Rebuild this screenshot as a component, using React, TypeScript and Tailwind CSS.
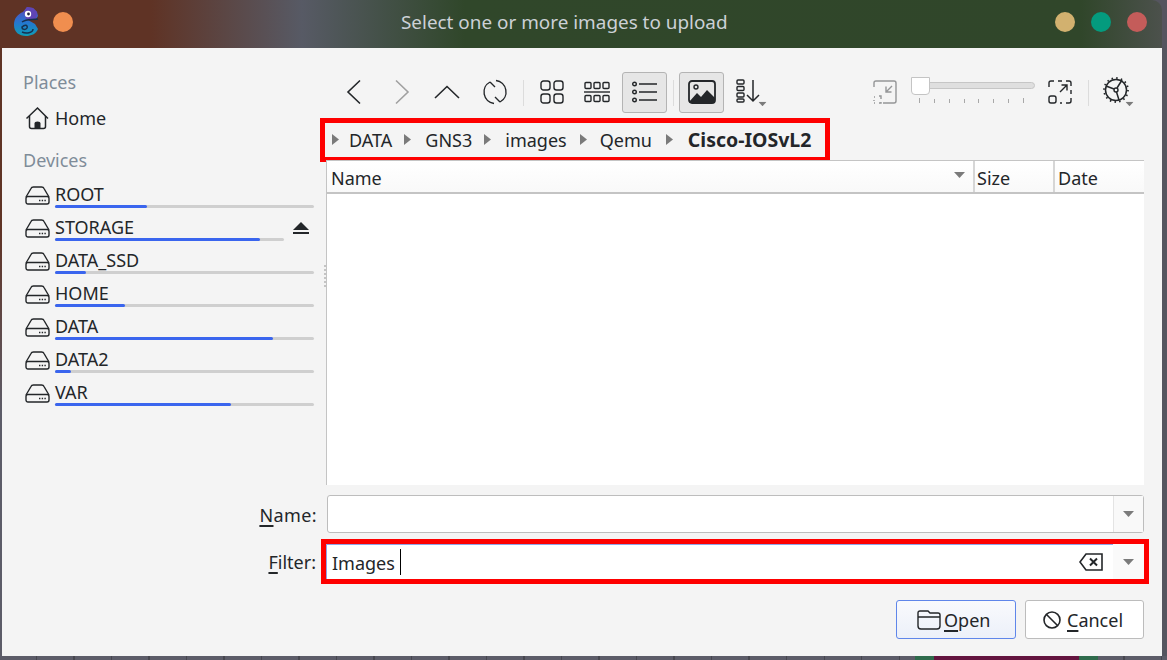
import { ReactNode } from "react";

const DEVICES = [
  { name: "ROOT", used: 92 },
  { name: "STORAGE", used: 205, track: 229, eject: true },
  { name: "DATA_SSD", used: 31 },
  { name: "HOME", used: 70 },
  { name: "DATA", used: 218 },
  { name: "DATA2", used: 16 },
  { name: "VAR", used: 176 },
];

function Svg({ w, h, children, className }: { w: number; h: number; children: ReactNode; className?: string }) {
  return (
    <svg
      width={w}
      height={h}
      viewBox={`0 0 ${w} ${h}`}
      fill="none"
      stroke="#232629"
      strokeWidth="1.4"
      className={className}
    >
      {children}
    </svg>
  );
}

function Logo() {
  return (
    <svg width="26" height="30" viewBox="0 0 26 30" className="shrink-0">
      <defs>
        <linearGradient id="logoBody" x1="0" y1="0" x2="0" y2="1">
          <stop offset="0" stopColor="#5b49bd" />
          <stop offset="0.55" stopColor="#2478d0" />
          <stop offset="1" stopColor="#0f9db5" />
        </linearGradient>
      </defs>
      <path d="M1 18C1 11 5 7 10 5L14 0L20 1L24 5L25 9L23 12L15 13L22 17L25 22C23 27 18 29 13 29C6 29 1 25 1 18Z" fill="url(#logoBody)" />
      <path d="M11 5L14 0L20 1L24 5L23 12L13 12Z" fill="#5f45b5" />
      <circle cx="15" cy="7" r="3.2" fill="#fff" />
      <circle cx="15.5" cy="7" r="1.4" fill="#26243f" />
      <path d="M9 15C13 12 19 13 25 12M9 20C12 17 15 18 14 21C13 23 9 23 9 20ZM9 25C13 27 20 26 20 22" stroke="#16304f" strokeWidth="1.5" fill="none" />
    </svg>
  );
}

function HomeIcon() {
  return (
    <Svg w={24} h={24}>
      <path d="M1.5 12.5L12.5 2L23 12.5" strokeWidth="1.5" />
      <path d="M4.5 10V20.5Q4.5 22.5 6.5 22.5H18.5Q20.5 22.5 20.5 20.5V10" strokeWidth="1.5" />
      <path d="M9.5 22.5V17.5Q9.5 15.5 12.5 15.5Q15.5 15.5 15.5 17.5V22.5Z" fill="#232629" stroke="none" />
    </Svg>
  );
}

function DriveIcon() {
  return (
    <Svg w={25} h={19} className="shrink-0">
      <path d="M1 11L6 2.5Q6.5 1 8.5 1H16.5Q18.5 1 19 2.5L24 11" />
      <rect x="1" y="10.5" width="23" height="7.5" rx="2" />
      <path d="M14 14.5H21" strokeDasharray="1.4 1.3" strokeWidth="1.6" />
    </Svg>
  );
}

function Device({ name, used, track, eject }: { name: string; used: number; track?: number; eject?: boolean }) {
  return (
    <div className="flex h-[33px] gap-[5px] pl-[23px]">
      <div className="pt-[4px]">
        <DriveIcon />
      </div>
      <div className="relative flex-1">
        <div className="h-[23px] text-[18px] leading-[24px] text-[#232629]">{name}</div>
        <div className="h-[3px] rounded-full bg-[#cfcfcf]" style={{ width: track ?? 259 }}>
          <div className="h-[3px] rounded-full bg-[#3a65ee]" style={{ width: used }} />
        </div>
        {eject && (
          <svg width="16" height="12" viewBox="0 0 16 12" className="absolute right-[17px] top-[7px]">
            <path d="M8 0L16 8H0Z" fill="#232629" />
            <rect x="0" y="10" width="16" height="2" fill="#232629" />
          </svg>
        )}
      </div>
    </div>
  );
}

function Sidebar() {
  return (
    <aside className="relative w-[324px] shrink-0">
      <div className="pl-[21px] pt-[21px] text-[18px] leading-[26px] text-[#7f8c99]">Places</div>
      <div className="mt-[11px] flex h-[24px] items-center gap-[5px] pl-[23px] text-[18px] text-[#232629]">
        <HomeIcon />
        <span className="ml-[1px]">Home</span>
      </div>
      <div className="pl-[21px] pt-[18px] text-[18px] leading-[24px] text-[#7f8c99]">Devices</div>
      <div className="mt-[10px]">
        {DEVICES.map((device) => (
          <Device key={device.name} {...device} />
        ))}
      </div>
      <div className="absolute right-0 top-[217px] flex flex-col gap-[2px]">
        {[0, 1, 2, 3, 4, 5].map((i) => (
          <div key={i} className="h-[2px] w-[2px] bg-[#c4c4c4]" />
        ))}
      </div>
    </aside>
  );
}

function ToolButton({ children, className, active }: { children: ReactNode; className: string; active?: boolean }) {
  return (
    <div
      className={
        active
          ? `flex h-[41px] shrink-0 items-center justify-center rounded-[3px] border border-[#b4b4b4] bg-[#e6e6e6] pb-[1px] ${className}`
          : `flex h-[41px] shrink-0 items-center justify-center pb-[1px] ${className}`
      }
    >
      {children}
    </div>
  );
}

function Separator({ className }: { className: string }) {
  return <div className={`h-[26px] w-px shrink-0 bg-[#dcdcdc] ${className}`} />;
}

function Caret({ className }: { className?: string }) {
  return (
    <svg width="11" height="6" viewBox="0 0 11 6" className={className}>
      <path d="M0 0H11L5.5 6Z" fill="#7b7b7b" />
    </svg>
  );
}

function Toolbar() {
  return (
    <div className="flex h-[41px] items-center pl-[19px]">
      <ToolButton className="w-[18px]">
        <Svg w={16} h={26}><path d="M14 1.5L2 13L14 24.5" strokeWidth="1.6" /></Svg>
      </ToolButton>
      <ToolButton className="ml-[30px] w-[18px]">
        <Svg w={16} h={26}><path d="M2 1.5L14 13L2 24.5" stroke="#a0a0a0" strokeWidth="1.6" /></Svg>
      </ToolButton>
      <ToolButton className="ml-[23px] w-[26px]">
        <Svg w={26} h={14}><path d="M1 13L13 1.5L25 13" strokeWidth="1.6" /></Svg>
      </ToolButton>
      <ToolButton className="ml-[22px] w-[26px]">
        <Svg w={26} h={26}>
          <path d="M8 3A11.5 11.5 0 0 0 12 24.5M8 3L13 8" />
          <path d="M18 23A11.5 11.5 0 0 0 14 1.5M18 23L13 18" />
        </Svg>
      </ToolButton>
      <Separator className="ml-[15px]" />
      <ToolButton className="ml-[16px] w-[24px]">
        <Svg w={24} h={24}>
          <rect x="1" y="1" width="9" height="9" rx="2.5" />
          <rect x="14" y="1" width="9" height="9" rx="2.5" />
          <rect x="1" y="14" width="9" height="9" rx="2.5" />
          <rect x="14" y="14" width="9" height="9" rx="2.5" />
        </Svg>
      </ToolButton>
      <ToolButton className="ml-[20px] w-[26px]">
        <Svg w={26} h={22}>
          <rect x="1" y="1.5" width="6" height="6" rx="1" />
          <rect x="10" y="1.5" width="6" height="6" rx="1" />
          <rect x="19" y="1.5" width="6" height="6" rx="1" />
          <path d="M0 11H26" />
          <rect x="1" y="14.5" width="6" height="6" rx="1" />
          <rect x="10" y="14.5" width="6" height="6" rx="1" />
          <rect x="19" y="14.5" width="6" height="6" rx="1" />
        </Svg>
      </ToolButton>
      <ToolButton active className="ml-[12px] w-[45px]">
        <Svg w={25} h={22}>
          <circle cx="2.5" cy="3" r="1.8" />
          <circle cx="2.5" cy="11" r="1.8" />
          <circle cx="2.5" cy="19" r="1.8" />
          <path d="M7 3H25M7 11H25M7 19H25" strokeWidth="1.5" />
        </Svg>
      </ToolButton>
      <Separator className="ml-[6px]" />
      <ToolButton active className="ml-[5px] w-[45px]">
        <Svg w={28} h={24}>
          <rect x="1" y="1" width="26" height="22" rx="3" strokeWidth="1.8" />
          <circle cx="8" cy="7" r="2" />
          <path d="M1 22L9 13L13 17L19 10L27 18V21Q27 23 25 23H3Q1 23 1 22Z" fill="#232629" stroke="none" />
        </Svg>
      </ToolButton>
      <ToolButton className="ml-[12px] w-[32px]">
        <div className="relative h-[30px] w-[32px]">
          <Svg w={26} h={24} className="absolute left-0 top-[2px]">
            <rect x="1" y="1" width="7" height="4" rx="1" />
            <rect x="1" y="7.5" width="7" height="4" rx="1" />
            <rect x="1" y="14" width="7" height="4" rx="1" />
            <rect x="1" y="20" width="7" height="3" rx="1" />
            <path d="M17 1V22M11 16L17 22L23 16" strokeWidth="1.5" />
          </Svg>
          <Caret className="absolute bottom-0 right-0 scale-75" />
        </div>
      </ToolButton>
      <ToolButton className="ml-[104px] w-[26px]">
        <Svg w={26} h={26} className="opacity-45">
          <path d="M2 8V4Q2 2 4 2H22Q24 2 24 4V22Q24 24 22 24H11" />
          <path d="M2 18H3M7 17H9V20M2 24H3M7 24H9V23M2 21V22" />
          <path d="M20 7L14 13M14 7.5V13H19.5" />
        </Svg>
      </ToolButton>
      <Slider />
      <ToolButton className="ml-[12px] w-[26px]">
        <Svg w={26} h={26}>
          <path d="M2 8V4Q2 2 4 2H7M11 2H15M19 2H22Q24 2 24 4V7M24 11V15M24 19V22Q24 24 22 24H19M15 24H13" />
          <rect x="2" y="17" width="7" height="7" rx="2" />
          <path d="M13 13L20 6M14.5 6H20V11.5" />
        </Svg>
      </ToolButton>
      <Separator className="ml-[15px]" />
      <ToolButton className="ml-[14px] w-[30px]">
        <div className="relative h-[30px] w-[30px]">
          <Svg w={26} h={26} className="absolute left-0 top-0">
            <circle cx="13" cy="13" r="10.5" strokeWidth="1.5" />
            <circle cx="13" cy="13" r="12" strokeDasharray="1.5 3.2" strokeWidth="1.8" />
            <circle cx="13" cy="13" r="2" />
            <path d="M11 12L3 9M14 11L19 3M13.5 15L16 23" strokeWidth="1.5" />
          </Svg>
          <Caret className="absolute bottom-0 right-[-2px] scale-75" />
        </div>
      </ToolButton>
    </div>
  );
}

function Slider() {
  return (
    <div className="relative ml-[13px] h-[36px] w-[124px] shrink-0">
      <div className="absolute left-0 right-0 top-[7px] h-[7px] rounded-full border border-[#c6c6c6] bg-[#dfdfdf]" />
      <div className="absolute left-0 top-[2px] h-[18px] w-[19px] rounded-b-[4px] border border-[#c4c4c4] bg-white" />
      <div className="absolute left-[8px] right-[11px] top-[23px] flex justify-between">
        {[0, 1, 2, 3, 4, 5, 6, 7].map((i) => (
          <div key={i} className={i === 0 || i === 7 ? "h-[5px] w-px bg-[#a8a8a8]" : "mt-px h-[4px] w-px bg-[#a8a8a8]"} />
        ))}
      </div>
    </div>
  );
}

function Arrow() {
  return (
    <svg width="7" height="11" viewBox="0 0 7 11" className="mb-[2px] shrink-0">
      <path d="M0 0L7 5.5L0 11Z" fill="#7a7a7a" />
    </svg>
  );
}

function Breadcrumb() {
  const crumbs = [
    { label: "DATA", gap: "ml-[10px] mr-[12px]" },
    { label: "GNS3", gap: "ml-[14px] mr-[12px]" },
    { label: "images", gap: "ml-[14px] mr-[13px]" },
    { label: "Qemu", gap: "ml-[13px] mr-[14px]" },
  ];
  return (
    <div className="ml-[-6px] mt-[5px] flex h-[44px] w-[510px] items-center border-[5px] border-[#fe0000] pl-[7px] text-[18px] text-[#232629]">
      {crumbs.map((crumb) => (
        <div key={crumb.label} className="flex items-center">
          <Arrow />
          <span className={crumb.gap}>{crumb.label}</span>
        </div>
      ))}
      <Arrow />
      <span className="ml-[15px] text-[19.5px] font-bold">Cisco-IOSvL2</span>
    </div>
  );
}

function FileTable() {
  return (
    <div className="mr-[18px] mt-[-2px] flex h-[325px] flex-col border-l border-t border-[#c4c4c4] bg-white">
      <div className="flex h-[33px] shrink-0 border-b-2 border-[#c4c4c4] bg-linear-to-b from-white to-[#f9f9f9] text-[18px] leading-[34px] text-[#232629]">
        <div className="relative flex-1 pl-[4px]">
          Name
          <Caret className="absolute right-[8px] top-[11px]" />
        </div>
        <div className="w-[80px] border-l-2 border-[#d6d6d6] pl-[2px]">Size</div>
        <div className="w-[91px] border-l-2 border-[#d6d6d6] pl-[3px]">Date</div>
      </div>
    </div>
  );
}

function Label({ letter, rest, className }: { letter: string; rest: string; className?: string }) {
  return (
    <div className={`flex w-[315px] justify-end pt-[2px] text-[18px] text-[#232629] ${className ?? ""}`}>
      <span>
        <span className="underline decoration-[1.5px] underline-offset-[3px]">{letter}</span>
        {rest}
      </span>
    </div>
  );
}

function Footer() {
  return (
    <div className="flex flex-col">
      <div className="mt-[9px] flex h-[38px] items-center">
        <Label letter="N" rest="ame:" className="tracking-[0.4px]" />
        <div className="ml-[10px] flex h-[38px] w-[817px] rounded-[3px] border border-[#bdbdbd] bg-white">
          <div className="flex-1" />
          <div className="flex w-[30px] items-center justify-center border-l border-[#e4e4e4] bg-[#f9f9f9]">
            <Caret />
          </div>
        </div>
      </div>
      <div className="mt-[6px] flex h-[45px] items-center">
        <Label letter="F" rest="ilter:" className="pr-[1px]" />
        <div className="ml-[4px] flex h-[45px] w-[828px] border-[5px] border-[#fe0000] bg-white">
          <div className="flex flex-1 items-center border-l border-t border-[#8ea5e8] pl-[5px] text-[18px] text-[#232629]">
            <span className="pt-[2px]">Images</span>
            <div className="ml-[5px] h-[26px] w-px bg-black" />
            <div className="flex-1" />
            <Svg w={24} h={18} className="mr-[10px]">
              <path d="M7 1H23V17H7L1 9Z" strokeWidth="1.6" />
              <path d="M11 5.5L18 12.5M18 5.5L11 12.5" strokeWidth="2" />
            </Svg>
          </div>
          <div className="flex w-[31px] items-center justify-center bg-[#fafafa] pr-[1px]">
            <Caret />
          </div>
        </div>
      </div>
      <div className="mt-[16px] flex justify-end gap-[9px] pr-[18px]">
        <div className="flex h-[39px] w-[120px] items-center rounded-[3px] border border-[#5f86ea] bg-linear-to-b from-[#f9fafd] to-[#ecf0f9] pl-[20px] text-[18px] text-[#232629]">
          <Svg w={24} h={20} className="mr-[3px]">
            <path d="M1 16V3Q1 1 3 1H11L13 3H21Q23 3 23 5V16Q23 19 20 19H4Q1 19 1 16ZM1 7H23" strokeWidth="1.4" />
          </Svg>
          <span className="pt-[1px]">
            <span className="underline decoration-[1.5px] underline-offset-[3px]">O</span>pen
          </span>
        </div>
        <div className="flex h-[39px] w-[119px] items-center rounded-[3px] border border-[#bcbcbc] bg-white pl-[17px] text-[18px] text-[#232629]">
          <Svg w={18} h={18} className="mr-[6px]">
            <circle cx="9" cy="9" r="8" strokeWidth="1.6" />
            <path d="M3.5 3.5L14.5 14.5" strokeWidth="1.6" />
          </Svg>
          <span className="pt-[1px]">
            <span className="underline decoration-[1.5px] underline-offset-[3px]">C</span>ancel
          </span>
        </div>
      </div>
    </div>
  );
}

function TitleBar() {
  return (
    <div className="flex h-[48px] items-center rounded-tr-[10px] bg-[linear-gradient(90deg,#5f3325_0%,#5f3325_13%,#575a65_26%,#30472a_40%,#30462a_93%,#4c514c_100%)] pb-[4px] pl-[13px] pr-[15px]">
      <Logo />
      <div className="ml-[14px] h-[20px] w-[20px] rounded-full bg-[#f08e4f]" />
      <div className="ml-[328px] flex-1 text-[18.9px] text-[#ccd1d6]">Select one or more images to upload</div>
      <div className="flex gap-[16px]">
        <div className="h-[20px] w-[20px] rounded-full bg-[#d2b16f]" />
        <div className="h-[20px] w-[20px] rounded-full bg-[#049b7e]" />
        <div className="h-[20px] w-[20px] rounded-full bg-[#c45c5a]" />
      </div>
    </div>
  );
}

function BottomStrip() {
  return (
    <div className="flex h-[4px] bg-[repeating-linear-gradient(90deg,#5c5c68_0,#5c5c68_36px,#47474f_36px,#47474f_37.5px)] pl-[915px]">
      <div className="w-[19px] bg-[#2f6b4c]" />
      <div className="w-[145px] bg-[#63143f]" />
      <div className="w-[19px] bg-[#2f6b4c]" />
    </div>
  );
}

export default function App() {
  return (
    <div className="h-[660px] w-[1167px] overflow-hidden bg-[#55555f] font-['Noto_Sans',sans-serif]">
      <div className="h-[656px] w-[1162px]">
        <TitleBar />
        <div className="flex h-[608px]">
          <div className="w-[2px] bg-linear-to-b from-[#5f3325] from-30% to-[#5c5c68] to-60%" />
          <div className="flex-1 bg-[#f4f4f4]">
            <div className="flex h-[438px]">
              <Sidebar />
              <main className="min-w-0 flex-1">
                <div className="pt-[24px]">
                  <Toolbar />
                </div>
                <Breadcrumb />
                <FileTable />
              </main>
            </div>
            <Footer />
          </div>
        </div>
      </div>
      <BottomStrip />
    </div>
  );
}
